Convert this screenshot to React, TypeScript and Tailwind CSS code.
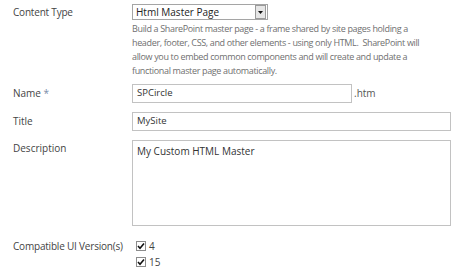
import React from "react";

const font = { fontFamily: '"Open Sans", "Noto Sans", sans-serif' };

const CheckBox: React.FC<{ label: string }> = ({ label }) => (
  <label className="flex items-center gap-[3px] h-4">
    <span className="w-[10px] h-[10px] border border-[#8c8c8c] bg-white flex items-center justify-center">
      <svg width="8" height="8" viewBox="0 0 8 8">
        <path d="M1 4 L3 6.2 L7 1.5" stroke="#111" strokeWidth="1.6" fill="none" />
      </svg>
    </span>
    <span className="text-[10px] text-[#444]">{label}</span>
  </label>
);

export default function App() {
  return (
    <div className="w-[474px] h-[279px] bg-white pl-[13px] text-[#444]" style={font}>
      {/* Content type */}
      <div className="flex pt-[4px]">
        <div className="w-[119px] text-[10px] leading-[16px] tracking-[-0.2px]">Content Type</div>
        <div>
          <div className="w-[136px] h-[16px] border border-[#a5a5a5] flex items-center">
            <span className="flex-1 pl-[3px] text-[10px] text-[#222] leading-none">Html Master Page</span>
            <span className="w-[11px] h-[14px] mr-px bg-[#e6e6e6] border border-[#9a9a9a] flex items-center justify-center">
              <svg width="5" height="3" viewBox="0 0 5 3">
                <path d="M0 0 H5 L2.5 3 Z" fill="#111" />
              </svg>
            </span>
          </div>
          <p className="mt-[2px] text-[9px] leading-[14px] text-[#6f6f6f] tracking-[-0.35px] whitespace-nowrap">
            Build a SharePoint master page - a frame shared by site pages holding a
            <br />
            header, footer, CSS, and other elements - using only HTML.&nbsp; SharePoint will
            <br />
            allow you to embed common components and will create and update a
            <br />
            functional master page automatically.
          </p>
        </div>
      </div>

      {/* Name */}
      <div className="flex mt-[6px] items-center">
        <div className="w-[119px] text-[10px]">
          Name <span className="text-[#7a8ca8]">*</span>
        </div>
        <div className="w-[220px] h-[19px] border border-[#c2c2c2] flex items-center pl-[4px] text-[9.5px] text-[#333]">
          SPCircle
        </div>
        <span className="ml-[2px] text-[10px] text-[#555]">.htm</span>
      </div>

      {/* Title */}
      <div className="flex mt-[9px] items-center">
        <div className="w-[119px] text-[10px]">Title</div>
        <div className="w-[319px] h-[19px] border border-[#c2c2c2] flex items-center pl-[4px] text-[9.5px] text-[#333]">
          MySite
        </div>
      </div>

      {/* Description */}
      <div className="flex mt-[9px]">
        <div className="w-[119px] text-[10px] pt-[1px]">Description</div>
        <div className="w-[319px] h-[86px] border border-[#c2c2c2] pl-[4px] pt-[3px] text-[10px] text-[#333]">
          My Custom HTML Master
        </div>
      </div>

      {/* Compatible UI */}
      <div className="flex mt-[12px]">
        <div className="w-[123px] text-[10px] leading-[16px] tracking-[-0.2px] whitespace-nowrap">
          Compatible UI Version(s)
        </div>
        <div className="flex flex-col">
          <CheckBox label="4" />
          <CheckBox label="15" />
        </div>
      </div>
    </div>
  );
}
